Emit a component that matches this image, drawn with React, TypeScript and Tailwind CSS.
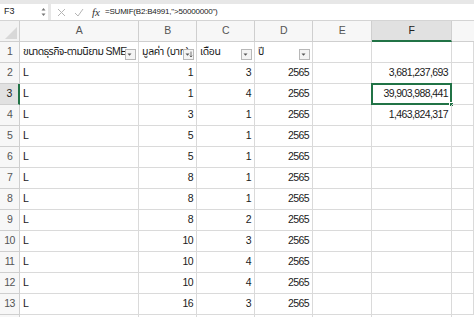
import React from 'react';

const rows = [
  ['L', '1', '3', '2565', '3,681,237,693'],
  ['L', '1', '4', '2565', '39,903,988,441'],
  ['L', '3', '1', '2565', '1,463,824,317'],
  ['L', '5', '1', '2565', ''],
  ['L', '5', '1', '2565', ''],
  ['L', '8', '1', '2565', ''],
  ['L', '8', '1', '2565', ''],
  ['L', '8', '2', '2565', ''],
  ['L', '10', '3', '2565', ''],
  ['L', '10', '4', '2565', ''],
  ['L', '10', '4', '2565', ''],
  ['L', '16', '3', '2565', ''],
];

const cols = ['A', 'B', 'C', 'D', 'E', 'F'];

function FilterButton({ sorted }: { sorted?: boolean }) {
  return (
    <span className="absolute right-[2px] bottom-[2px] w-[11px] h-[11px] border border-[#b8b8b8] bg-[#f4f4f4] flex items-center justify-center">
      <svg width="9" height="9" viewBox="0 0 9 9">
        <path d="M1.5 3.5h4l-2 2.2z" fill="#555" />
        {sorted && <path d="M7 1.5v5.5M5.8 5.6L7 7l1.2-1.4" stroke="#555" strokeWidth="0.8" fill="none" />}
      </svg>
    </span>
  );
}

export default function App() {
  const grid = 'grid grid-cols-[20px_119px_58px_58px_58px_59px_80px_22px]';
  const cell = 'relative border-r border-b border-[#dadada] h-[21px] flex items-center overflow-hidden whitespace-nowrap';
  const hdr = 'h-[21px] border-r border-b border-[#cfcfcf] bg-[#f7f7f7] flex items-center justify-center text-[#555] text-[10.5px]';

  return (
    <div className="w-[474px] h-[317px] overflow-hidden bg-white text-[#1a1a1a] font-['Liberation_Sans','Noto_Sans_Thai','Noto_Sans',sans-serif] text-[10.5px] tracking-[-0.6px]">
      <div className="h-[4px] bg-[#e7e7e7]" />
      <div className="h-[16px] flex items-stretch bg-white text-[9px] tracking-normal">
        <div className="w-[38px] flex items-center pl-[4px] text-[#222]">F3</div>
        <div className="w-[10px] flex items-center justify-center">
          <svg width="5" height="10" viewBox="0 0 5 10">
            <path d="M0.5 3.5L2.5 1l2 2.5z" fill="#777" />
            <path d="M0.5 6.5L2.5 9l2-2.5z" fill="#777" />
          </svg>
        </div>
        <div className="w-[3px] bg-[#e7e7e7]" />
        <div className="flex items-center pl-[6px] gap-[8px]">
          <svg width="9" height="9" viewBox="0 0 9 9">
            <path d="M1 1l7 7M8 1L1 8" stroke="#b5b5b5" strokeWidth="1" />
          </svg>
          <svg width="10" height="9" viewBox="0 0 10 9">
            <path d="M1 5l3 3 5-7" stroke="#b5b5b5" strokeWidth="1" fill="none" />
          </svg>
          <span className="font-['Liberation_Serif',serif] italic text-[11px] text-[#333]">fx</span>
        </div>
        <div className="flex items-center pl-[5px] text-[8px] tracking-[-0.2px] text-[#222]">
          =SUMIF(B2:B4991,"&gt;50000000")
        </div>
      </div>
      <div className="h-[1px] bg-[#d4d4d4]" />

      <div className={grid}>
        <div className="relative h-[21px] border-r border-b border-[#cfcfcf] bg-[#f3f3f3]">
          <svg className="absolute right-[2px] bottom-[2px]" width="12" height="12" viewBox="0 0 12 12">
            <path d="M12 0V12H0z" fill="#d8d8d8" />
          </svg>
        </div>
        {cols.map((c) => (
          <div
            key={c}
            className={
              c === 'F'
                ? 'h-[21px] border-r border-[#cfcfcf] border-b-2 border-b-[#217346] bg-[#e1e1e1] flex items-center justify-center text-[#222] text-[10.5px]'
                : hdr
            }
          >
            {c}
          </div>
        ))}
        <div className="h-[21px] border-b border-[#cfcfcf] bg-[#f7f7f7]" />

        <div className={hdr}>1</div>
        <div className={cell + ' pl-[3px] tracking-[-0.6px]'}>
          ขนาดธุรกิจ-ตามนิยาม SME
          <FilterButton />
        </div>
        <div className={cell + ' pl-[3px] tracking-[-0.3px]'}>
          มูลค่า (บาท)
          <FilterButton sorted />
        </div>
        <div className={cell + ' pl-[3px] tracking-[-0.3px]'}>
          เดือน
          <FilterButton />
        </div>
        <div className={cell + ' pl-[3px]'}>
          ปี
          <FilterButton />
        </div>
        <div className={cell} />
        <div className={cell} />
        <div className={cell} />

        {rows.map((r, i) => {
          const n = i + 2;
          const active = n === 3;
          return (
            <React.Fragment key={n}>
              <div
                className={
                  active
                    ? 'h-[21px] border-b border-[#cfcfcf] border-r-2 border-r-[#217346] bg-[#e1e1e1] flex items-center justify-center text-[#222] text-[10.5px]'
                    : hdr
                }
              >
                {n}
              </div>
              <div className={cell + ' pl-[3px]'}>{r[0]}</div>
              <div className={cell + ' justify-end pr-[3px]'}>{r[1]}</div>
              <div className={cell + ' justify-end pr-[3px]'}>{r[2]}</div>
              <div className={cell + ' justify-end pr-[3px]'}>{r[3]}</div>
              <div className={cell} />
              <div className={(active ? 'relative border-r border-b border-[#dadada] h-[21px] flex items-center whitespace-nowrap' : cell) + ' justify-end pr-[3px]'}>
                {r[4]}
                {active && (
                  <>
                    <span className="absolute -left-[1px] -top-[1px] -right-[1px] -bottom-[1px] border-2 border-[#217346]" />
                    <span className="absolute -right-[3px] -bottom-[3px] w-[5px] h-[5px] bg-[#217346] border border-white" />
                  </>
                )}
              </div>
              <div className={cell} />
            </React.Fragment>
          );
        })}
        <div className="h-[21px] border-r border-[#cfcfcf] bg-[#f7f7f7]" />
        <div className="h-[21px] border-r border-[#dadada]" />
        <div className="h-[21px] border-r border-[#dadada]" />
        <div className="h-[21px] border-r border-[#dadada]" />
        <div className="h-[21px] border-r border-[#dadada]" />
        <div className="h-[21px] border-r border-[#dadada]" />
        <div className="h-[21px] border-r border-[#dadada]" />
        <div className="h-[21px]" />
      </div>
    </div>
  );
}
